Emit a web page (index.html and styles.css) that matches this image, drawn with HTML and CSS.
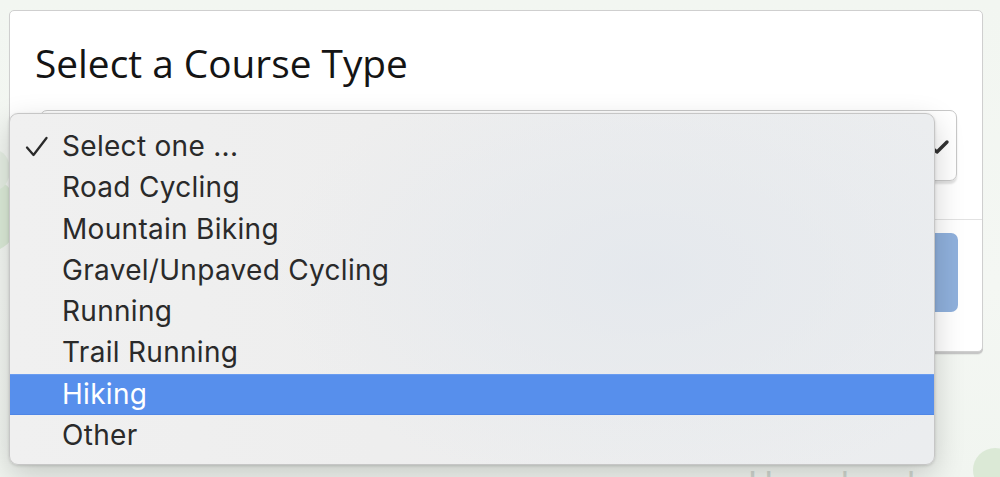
FILE: index.html
```html
<!DOCTYPE html>
<html>
<head>
<meta charset="utf-8">
<link rel="stylesheet" href="styles.css">
</head>
<body>
<div class="map">
  <div class="blob blob-a"></div>
  <div class="blob blob-b"></div>
  <div class="road-label">Hemlock Road</div>
  <div class="map-pin"></div>

  <div class="card">
    <h3 class="card-title">Select a Course Type</h3>
    <div class="select">
      <span class="select-value">Select one ...</span>
      <svg class="chevron" width="28" height="16" viewBox="0 0 28 16"><path d="M3 3 L15 13 L25 3" fill="none" stroke="#333" stroke-width="3.4" stroke-linecap="round" stroke-linejoin="round"/></svg>
    </div>
    <div class="card-footer">
      <div class="btn">Continue</div>
    </div>
  </div>

  <ul class="menu">
    <li class="item checked"><svg class="check" width="24" height="22" viewBox="0 0 24 22"><path d="M2 11.5 L8.5 19 L21.5 2" fill="none" stroke="#2a2a2a" stroke-width="2.3" stroke-linecap="round" stroke-linejoin="round"/></svg>Select one ...</li>
    <li class="item">Road Cycling</li>
    <li class="item">Mountain Biking</li>
    <li class="item">Gravel/Unpaved Cycling</li>
    <li class="item">Running</li>
    <li class="item">Trail Running</li>
    <li class="item active">Hiking</li>
    <li class="item">Other</li>
  </ul>
</div>
</body>
</html>
```
FILE: styles.css
```css
html, body {
  margin: 0;
  padding: 0;
}
body {
  width: 1000px;
  height: 477px;
  overflow: hidden;
  font-family: "Inter", "Liberation Sans", sans-serif;
}
.map {
  position: relative;
  width: 1000px;
  height: 477px;
  background: linear-gradient(180deg, #f2f6f1 0%, #f4f7f3 60%, #f1f5f0 100%);
  padding-top: 10px;
  box-sizing: border-box;
  overflow: hidden;
}
.blob {
  position: absolute;
  border-radius: 50%;
  background: #dcebd8;
}
.blob-a {
  left: -30px;
  top: 180px;
  width: 48px;
  height: 70px;
}
.blob-b {
  left: -20px;
  top: 150px;
  width: 30px;
  height: 40px;
  background: #e6efe4;
}
.road-label {
  position: absolute;
  left: 748px;
  top: 464px;
  font-size: 34px;
  line-height: 40px;
  color: #cfd5ce;
  letter-spacing: 6px;
}
.map-pin {
  position: absolute;
  left: 973px;
  top: 448px;
  width: 44px;
  height: 44px;
  border-radius: 50%;
  background: #dbe9d6;
}
.card {
  position: relative;
  margin-left: 9px;
  width: 974px;
  height: 342px;
  box-sizing: border-box;
  background: #fff;
  border: 1px solid #cfcfcf;
  border-radius: 5px;
  box-shadow: 0 2px 0 #c6c6c6, 0 3px 1px rgba(0,0,0,0.06);
  display: flex;
  flex-direction: column;
}
.card-title {
  margin: 0;
  padding: 29px 0 0 25px;
  height: 69px;
  box-sizing: border-box;
  font-family: "Open Sans", "Liberation Sans", sans-serif;
  font-weight: 400;
  font-size: 38.8px;
  line-height: 46px;
  color: #141414;
}
.select {
  margin: 30px 25px 0 30px;
  height: 71px;
  box-sizing: border-box;
  border: 1px solid #c8c8c8;
  border-radius: 7px;
  box-shadow: 0 3px 2px rgba(0,0,0,0.12);
  display: flex;
  align-items: center;
  justify-content: space-between;
  padding: 0 6px 0 20px;
  font-size: 28px;
  color: #333;
}
.chevron {
  margin-top: 2px;
}
.card-footer {
  margin-top: 38px;
  border-top: 1px solid #e2e2e2;
  padding: 13px 24px 0 30px;
}
.btn {
  height: 79px;
  border-radius: 7px;
  background: #8fb0dc;
  color: #fff;
  font-size: 24px;
  display: flex;
  align-items: center;
  justify-content: center;
}
.menu {
  position: absolute;
  left: 9px;
  top: 113px;
  width: 926px;
  height: 352px;
  box-sizing: border-box;
  margin: 0;
  padding: 12px 0 10px 0;
  list-style: none;
  border-radius: 9px;
  border: 1px solid #c6c6c6;
  background:
    radial-gradient(ellipse 380px 220px at 640px 160px, rgba(228,232,237,0.9), rgba(233,236,240,0) 100%),
    linear-gradient(90deg, #f0f0f0 0%, #eeeeee 40%, #ebedef 100%);
  box-shadow: 0 10px 30px rgba(0,0,0,0.18), 0 1px 3px rgba(0,0,0,0.15);
}
.item {
  position: relative;
  height: 41.3px;
  line-height: 41.3px;
  padding-left: 52px;
  font-size: 28px;
  color: #2a2a2a;
  letter-spacing: 0.3px;
}
.check {
  position: absolute;
  left: 15px;
  top: 10px;
}
.item.active {
  background: #578fec;
  color: #fff;
  box-shadow: inset 0 1px 0 #6a9cf0, inset 0 -1px 0 #4f86e6;
}
```
